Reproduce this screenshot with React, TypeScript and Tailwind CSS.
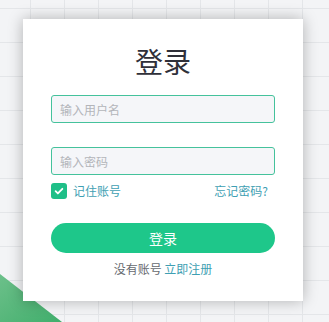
export default function App() {
  return (
    <div
      className="relative h-[322px] w-[329px] overflow-hidden bg-[#f3f4f6] bg-[linear-gradient(#e4e6e9_1px,transparent_1px),linear-gradient(90deg,#e4e6e9_1px,transparent_1px)] bg-[size:34px_34px] bg-[position:30px_8px] pl-[23px] pt-[19px]"
      style={{ fontFamily: '"Noto Sans CJK SC", "Noto Sans", sans-serif' }}
    >
      {/* green corner decoration */}
      <div className="absolute bottom-0 left-0 h-[48px] w-[62px] bg-gradient-to-br from-[#6cc08a] to-[#3fae6c] [clip-path:polygon(0_0,100%_100%,0_100%)]" />

      <div className="relative flex h-[282px] w-[280px] flex-col bg-white px-[28px] pt-[22px] shadow-[0_0_14px_rgba(0,0,0,0.28)]">
        <h1 className="text-center text-[28px] leading-[40px] text-[#2f3039]">登录</h1>

        <input
          className="mt-[14px] h-[28px] w-full rounded-[3px] border border-[#45c29c] bg-[#f5f6f9] px-[8px] text-[12px] outline-none placeholder:text-[#b3b5ba]"
          placeholder="输入用户名"
        />
        <input
          type="password"
          className="mt-[24px] h-[28px] w-full rounded-[3px] border border-[#45c29c] bg-[#f5f6f9] px-[8px] text-[12px] outline-none placeholder:text-[#b3b5ba]"
          placeholder="输入密码"
        />

        <div className="mt-[8px] flex h-[16px] items-center justify-between">
          <label className="flex items-center gap-[6px] text-[12px] text-[#3f9fb3]">
            <span className="flex h-[16px] w-[16px] items-center justify-center rounded-[3px] bg-[#1fbf88]">
              <svg viewBox="0 0 16 16" className="h-[12px] w-[12px]" fill="none" stroke="white" strokeWidth="2.4" strokeLinecap="round" strokeLinejoin="round">
                <path d="M3.5 8.3l3 3 6-6.2" />
              </svg>
            </span>
            记住账号
          </label>
          <a className="mr-[7px] text-[12px] text-[#3f9fb3]">忘记密码?</a>
        </div>

        <button className="mt-[24px] h-[30px] w-full rounded-full bg-[#1ec78a] text-[14px] text-white">登录</button>

        <p className="mt-[6px] text-center text-[12px] leading-[20px] text-[#666a70]">
          没有账号 <a className="text-[#3f9fb3]">立即注册</a>
        </p>
      </div>
    </div>
  );
}
